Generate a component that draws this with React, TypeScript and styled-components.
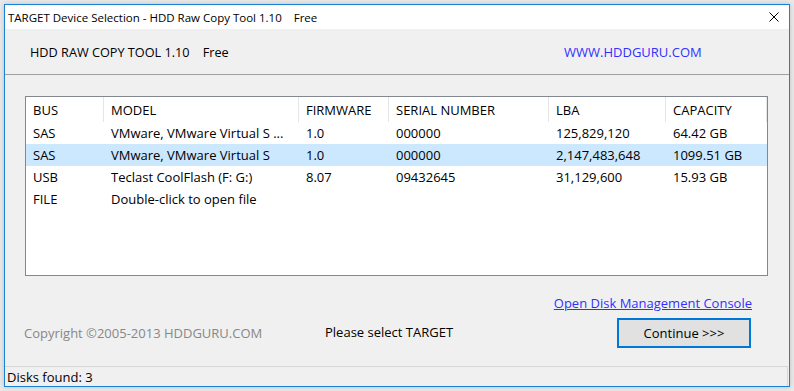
import React from "react";
import styled, { createGlobalStyle } from "styled-components";

const GlobalStyle = createGlobalStyle`
  html, body {
    margin: 0;
    padding: 0;
    background: #e9e9e9;
  }
  body {
    padding: 4px;
    font-family: "Open Sans", "Noto Sans", sans-serif;
    font-size: 13px;
    color: #000;
  }
`;

type Disk = {
  bus: string;
  model: string;
  firmware: string;
  serial: string;
  lba: string;
  capacity: string;
};

const COLUMNS = [
  { key: "bus", label: "BUS", width: 78 },
  { key: "model", label: "MODEL", width: 195 },
  { key: "firmware", label: "FIRMWARE", width: 90 },
  { key: "serial", label: "SERIAL NUMBER", width: 160 },
  { key: "lba", label: "LBA", width: 117 },
  { key: "capacity", label: "CAPACITY", width: 101 },
] as const;

const DISKS: Disk[] = [
  { bus: "SAS", model: "VMware, VMware Virtual S ...", firmware: "1.0", serial: "000000", lba: "125,829,120", capacity: "64.42 GB" },
  { bus: "SAS", model: "VMware, VMware Virtual S", firmware: "1.0", serial: "000000", lba: "2,147,483,648", capacity: "1099.51 GB" },
  { bus: "USB", model: "Teclast CoolFlash (F: G:)", firmware: "8.07", serial: "09432645", lba: "31,129,600", capacity: "15.93 GB" },
  { bus: "FILE", model: "Double-click to open file", firmware: "", serial: "", lba: "", capacity: "" },
];

const SELECTED = 1;

const App = () => {
  return (
    <>
      <GlobalStyle />
      <Window>
        <TitleBar>
          <TitleText>TARGET Device Selection - HDD Raw Copy Tool 1.10&nbsp;&nbsp;&nbsp;&nbsp;Free</TitleText>
          <CloseButton aria-label="Close">
            <svg width="10" height="10" viewBox="0 0 10 10">
              <path d="M0.5 0.5 L9.5 9.5 M9.5 0.5 L0.5 9.5" stroke="#000" strokeWidth="1" fill="none" />
            </svg>
          </CloseButton>
        </TitleBar>

        <Header>
          <ProductName>HDD RAW COPY TOOL 1.10&nbsp;&nbsp;&nbsp;&nbsp;Free</ProductName>
          <SiteLink>WWW.HDDGURU.COM</SiteLink>
        </Header>

        <Main>
          <ListBox>
            <ListRow $header>
              {COLUMNS.map((c) => (
                <HeaderCell key={c.key} $width={c.width}>{c.label}</HeaderCell>
              ))}
            </ListRow>
            {DISKS.map((d, i) => (
              <ListRow key={i} $selected={i === SELECTED}>
                {COLUMNS.map((c) => (
                  <Cell key={c.key} $width={c.width}>{d[c.key]}</Cell>
                ))}
              </ListRow>
            ))}
          </ListBox>

          <LinkRow>
            <ConsoleLink href="#">Open Disk Management Console</ConsoleLink>
          </LinkRow>

          <ActionRow>
            <Copyright>Copyright ©2005-2013 HDDGURU.COM</Copyright>
            <Prompt>Please select TARGET</Prompt>
            <ContinueButton>Continue &gt;&gt;&gt;</ContinueButton>
          </ActionRow>
        </Main>

        <StatusBar>Disks found: 3</StatusBar>
      </Window>
    </>
  );
};

export default App;

const Window = styled.div`
  width: 786px;
  height: 383px;
  box-sizing: border-box;
  border: 1px solid #1a82d6;
  background: #f0f0f0;
  display: flex;
  flex-direction: column;
  box-shadow: 0 0 5px rgba(0, 0, 0, 0.18);
`;

const TitleBar = styled.div`
  height: 24px;
  flex: none;
  background: #fff;
  display: flex;
  align-items: center;
  padding-left: 3px;
`;

const TitleText = styled.div`
  flex: 1;
  font-size: 11.5px;
  white-space: nowrap;
`;

const CloseButton = styled.div`
  width: 30px;
  height: 24px;
  display: flex;
  align-items: center;
  justify-content: center;
`;

const Header = styled.div`
  height: 45px;
  flex: none;
  border-bottom: 1px solid #a0a0a0;
  display: flex;
  align-items: center;
  padding-left: 25px;
`;

const ProductName = styled.div`
  width: 534px;
  font-size: 12.7px;
  white-space: nowrap;
`;

const SiteLink = styled.div`
  font-size: 13px;
  color: #3030ff;
`;

const Main = styled.div`
  flex: 1;
  display: flex;
  flex-direction: column;
  padding: 21px 21px 0 20px;
`;

const ListBox = styled.div`
  height: 180px;
  box-sizing: border-box;
  border: 1px solid #828790;
  background: #fff;
`;

const ListRow = styled.div<{ $header?: boolean; $selected?: boolean }>`
  display: flex;
  height: ${(p) => (p.$header ? 25 : 22)}px;
  background: ${(p) => (p.$selected ? "#cce8ff" : "transparent")};
`;

const HeaderCell = styled.div<{ $width: number }>`
  width: ${(p) => p.$width}px;
  box-sizing: border-box;
  flex: none;
  display: flex;
  align-items: center;
  padding-left: 7px;
  border-right: 1px solid #e5e5e5;
  white-space: nowrap;
`;

const Cell = styled.div<{ $width: number }>`
  width: ${(p) => p.$width}px;
  box-sizing: border-box;
  flex: none;
  display: flex;
  align-items: center;
  padding-left: 7px;
  white-space: nowrap;
  overflow: hidden;
`;

const LinkRow = styled.div`
  display: flex;
  justify-content: flex-end;
  margin-top: 19px;
  padding-right: 16px;
`;

const ConsoleLink = styled.a`
  color: #3030ff;
  text-decoration: underline;
  line-height: 16px;
`;

const ActionRow = styled.div`
  display: grid;
  grid-template-columns: 301px 1fr 134px;
  align-items: center;
  margin-top: 7px;
  margin-left: -1px;
  padding-right: 17px;
`;

const Copyright = styled.div`
  color: #878787;
  white-space: nowrap;
`;

const Prompt = styled.div`
  white-space: nowrap;
  margin-top: -2px;
`;

const ContinueButton = styled.button`
  height: 30px;
  box-sizing: border-box;
  border: 2px solid #0078d7;
  background: #e1e1e1;
  font-family: inherit;
  font-size: 13px;
  color: #000;
  padding: 0;
`;

const StatusBar = styled.div`
  height: 19px;
  flex: none;
  border-top: 1px solid #d7d7d7;
  border-right: 1px solid #d7d7d7;
  margin-right: 1px;
  display: flex;
  align-items: center;
  padding-left: 2px;
`;
